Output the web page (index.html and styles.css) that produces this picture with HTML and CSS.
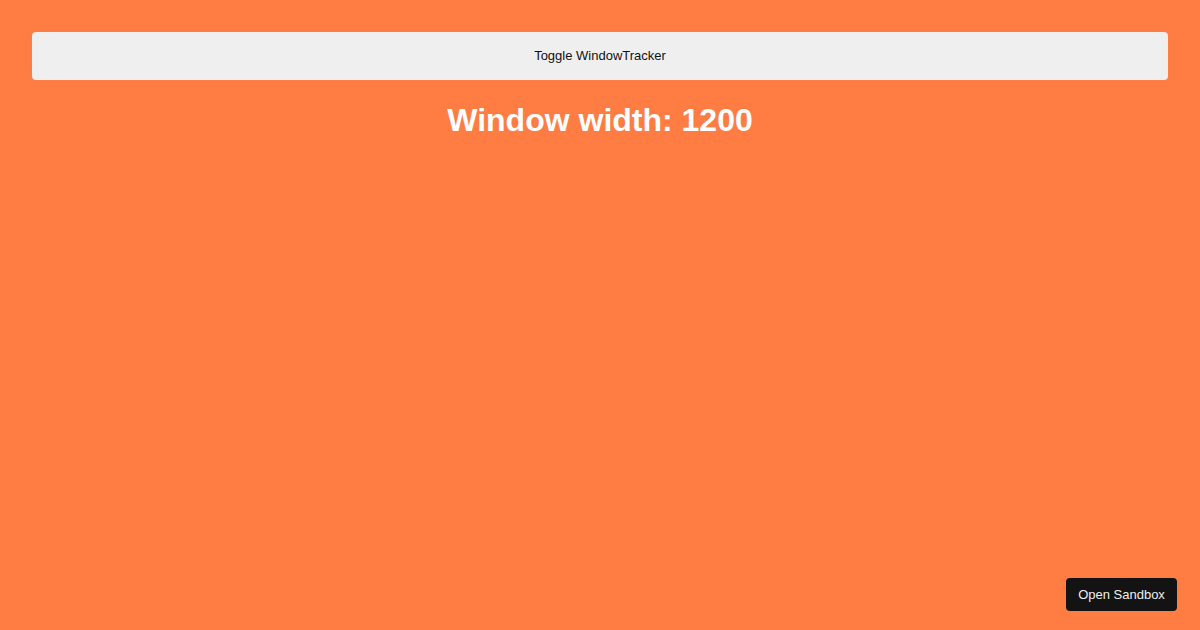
FILE: index.html
```html
<!DOCTYPE html>
<html>
<head>
<meta charset="utf-8">
<link rel="stylesheet" href="styles.css">
</head>
<body>
<div class="app">
  <button class="toggle">Toggle WindowTracker</button>
  <h1 class="title">Window width: 1200</h1>
</div>
<a class="sandbox">Open Sandbox</a>
</body>
</html>
```
FILE: styles.css
```css
html, body {
  margin: 0;
  padding: 0;
  height: 100%;
}
body {
  background: #ff7c43;
  font-family: "Liberation Sans", Arial, sans-serif;
}
.app {
  padding: 32px;
  display: flex;
  flex-direction: column;
  align-items: stretch;
}
.toggle {
  height: 48px;
  border: none;
  border-radius: 4px;
  background: #efefef;
  color: #111;
  font-family: "Liberation Sans", Arial, sans-serif;
  font-size: 13px;
  padding: 0 0 1px;
}
.title {
  margin: 22px 0 0;
  text-align: center;
  color: #fff;
  font-size: 32px;
  font-weight: bold;
  line-height: 37px;
}
.sandbox {
  position: fixed;
  right: 23px;
  bottom: 19px;
  background: #131313;
  color: #eee;
  font-size: 13px;
  border-radius: 4px;
  height: 33px;
  line-height: 33px;
  padding: 0 12px 0 12px;
  box-sizing: border-box;
  white-space: nowrap;
  text-align: center;
  width: 111px;
}
```
